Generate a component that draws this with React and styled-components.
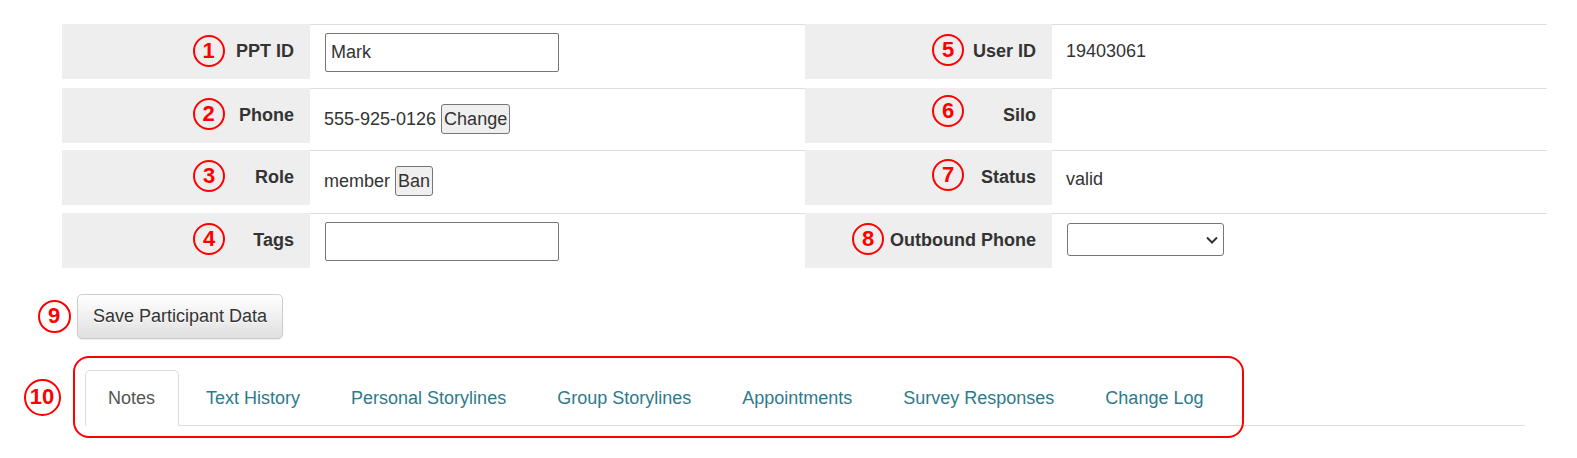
import React from "react";
import styled, { createGlobalStyle } from "styled-components";

const Global = createGlobalStyle`
  html, body { margin: 0; padding: 0; background: #fff; }
  body {
    font-family: "Liberation Sans", Arial, sans-serif;
    font-size: 18px;
    color: #333;
  }
  * { box-sizing: border-box; }
`;

const Page = styled.div`
  position: relative;
  padding: 24px 30px 30px 62px;
  min-height: 458px;
`;

const Table = styled.div`
  display: flex;
  flex-direction: column;
`;

const Row = styled.div`
  display: flex;
  border-top: 1px solid #ddd;
  height: ${(p) => p.$h}px;
`;

const Label = styled.div`
  flex: 0 0 ${(p) => p.$w}px;
  height: 55px;
  margin-top: -1px;
  background: #eee;
  display: flex;
  align-items: center;
  justify-content: flex-end;
  padding-right: 16px;
  font-weight: bold;
  color: #333;
`;

const Value = styled.div`
  ${(p) => (p.$w ? `flex: 0 0 ${p.$w}px;` : "flex: 1 1 auto;")}
  height: 55px;
  margin-top: -1px;
  display: flex;
  align-items: center;
  gap: 5px;
  padding-left: 14px;
  padding-top: ${(p) => p.$pt || 0}px;
  color: #333;
`;

const Spacer = styled.div`
  flex: 0 0 8px;
`;

const TextInput = styled.input`
  width: 234px;
  height: 39px;
  margin-left: 1px;
  border: 1px solid #767676;
  border-radius: 2px;
  padding: 0 5px;
  font-family: "Liberation Sans", Arial, sans-serif;
  font-size: 18px;
  color: #333;
  background: #fff;
  outline: none;
`;

const MiniButton = styled.button`
  height: 30px;
  padding: 0 2px;
  border: 1px solid #767676;
  border-radius: 3px;
  background: #efefef;
  font-family: "Liberation Sans", Arial, sans-serif;
  font-size: 18px;
  line-height: 28px;
  color: #333;
`;

const SelectWrap = styled.div`
  position: relative;
  display: inline-flex;
  margin-left: 1px;
  margin-bottom: 2px;
`;

const Select = styled.select`
  appearance: none;
  -webkit-appearance: none;
  width: 157px;
  height: 33px;
  border: 1px solid #767676;
  border-radius: 3px;
  background: #fff;
  font-family: "Liberation Sans", Arial, sans-serif;
  font-size: 18px;
  color: #333;
  padding: 0 24px 0 4px;
`;

const Chevron = styled.svg`
  position: absolute;
  right: 6px;
  top: 13px;
  pointer-events: none;
`;

const SaveBar = styled.div`
  margin-top: 24px;
  padding-left: 15px;
`;

const SaveButton = styled.button`
  height: 45px;
  padding: 0 15px;
  border: 1px solid #ccc;
  border-radius: 5px;
  background-image: linear-gradient(to bottom, #fff 0%, #e0e0e0 100%);
  box-shadow: inset 0 1px 0 rgba(255, 255, 255, 0.15), 0 1px 1px rgba(0, 0, 0, 0.075);
  text-shadow: 0 1px 0 #fff;
  font-family: "Liberation Sans", Arial, sans-serif;
  font-size: 18px;
  color: #333;
`;

const TabList = styled.div`
  margin-top: 31px;
  margin-left: 23px;
  width: 1440px;
  display: flex;
  border-bottom: 1px solid #ddd;
  height: 56px;
`;

const Tab = styled.div`
  height: 56px;
  margin-bottom: -1px;
  margin-right: 4px;
  padding: 0 23px 0 22px;
  display: flex;
  align-items: center;
  border: 1px solid transparent;
  border-radius: 5px 5px 0 0;
  color: ${(p) => (p.$active ? "#555" : "#2d7a8c")};
  background: ${(p) => (p.$active ? "#fff" : "transparent")};
  ${(p) => p.$active && "border-color: #ddd #ddd transparent;"}
  white-space: nowrap;
`;

const Marker = styled.div`
  position: absolute;
  left: ${(p) => p.$x - p.$d / 2}px;
  top: ${(p) => p.$y - p.$d / 2}px;
  width: ${(p) => p.$d}px;
  height: ${(p) => p.$d}px;
  border: 2px solid #f00;
  border-radius: 50%;
  display: flex;
  align-items: center;
  justify-content: center;
  color: #f00;
  font-weight: bold;
  font-size: 22px;
  line-height: 1;
  pointer-events: none;
`;

const Frame = styled.div`
  position: absolute;
  left: 73px;
  top: 356px;
  width: 1171px;
  height: 82px;
  border: 2px solid #f00;
  border-radius: 16px;
  pointer-events: none;
`;

const markers = [
  { n: 1, x: 208.5, y: 51, d: 32 },
  { n: 2, x: 208.5, y: 113.5, d: 32 },
  { n: 3, x: 209, y: 175.5, d: 32 },
  { n: 4, x: 209, y: 239, d: 32 },
  { n: 5, x: 948, y: 50, d: 32 },
  { n: 6, x: 948, y: 110.5, d: 32 },
  { n: 7, x: 948, y: 175, d: 32 },
  { n: 8, x: 868, y: 239, d: 32 },
  { n: 9, x: 54, y: 316, d: 33 },
  { n: 10, x: 42, y: 397, d: 37 },
];

const tabs = [
  "Notes",
  "Text History",
  "Personal Storylines",
  "Group Storylines",
  "Appointments",
  "Survey Responses",
  "Change Log",
];

export default function App() {
  return (
    <>
      <Global />
      <Page>
        <Table>
          <Row $h={64}>
            <Label $w={248}>PPT ID</Label>
            <Value $w={487} $pt={2}>
              <TextInput defaultValue="Mark" />
            </Value>
            <Spacer />
            <Label $w={247}>User ID</Label>
            <Value>19403061</Value>
          </Row>
          <Row $h={62}>
            <Label $w={248}>Phone</Label>
            <Value $w={487} $pt={7}>
              <span>555-925-0126</span>
              <MiniButton>Change</MiniButton>
            </Value>
            <Spacer />
            <Label $w={247}>Silo</Label>
            <Value $pt={7} />
          </Row>
          <Row $h={63}>
            <Label $w={248}>Role</Label>
            <Value $w={487} $pt={7}>
              <span>member</span>
              <MiniButton>Ban</MiniButton>
            </Value>
            <Spacer />
            <Label $w={247}>Status</Label>
            <Value $pt={4}>valid</Value>
          </Row>
          <Row $h={57}>
            <Label $w={248}>Tags</Label>
            <Value $w={487} $pt={2}>
              <TextInput defaultValue="" />
            </Value>
            <Spacer />
            <Label $w={247}>Outbound Phone</Label>
            <Value>
              <SelectWrap>
                <Select defaultValue="">
                  <option value=""></option>
                </Select>
                <Chevron width="12" height="8" viewBox="0 0 12 8">
                  <polyline points="1,1.5 6,6.5 11,1.5" fill="none" stroke="#333" strokeWidth="2" />
                </Chevron>
              </SelectWrap>
            </Value>
          </Row>
        </Table>

        <SaveBar>
          <SaveButton>Save Participant Data</SaveButton>
        </SaveBar>

        <TabList>
          {tabs.map((t, i) => (
            <Tab key={t} $active={i === 0}>
              {t}
            </Tab>
          ))}
        </TabList>

        <Frame />
        {markers.map((m) => (
          <Marker key={m.n} $x={m.x} $y={m.y} $d={m.d}>
            {m.n}
          </Marker>
        ))}
      </Page>
    </>
  );
}
